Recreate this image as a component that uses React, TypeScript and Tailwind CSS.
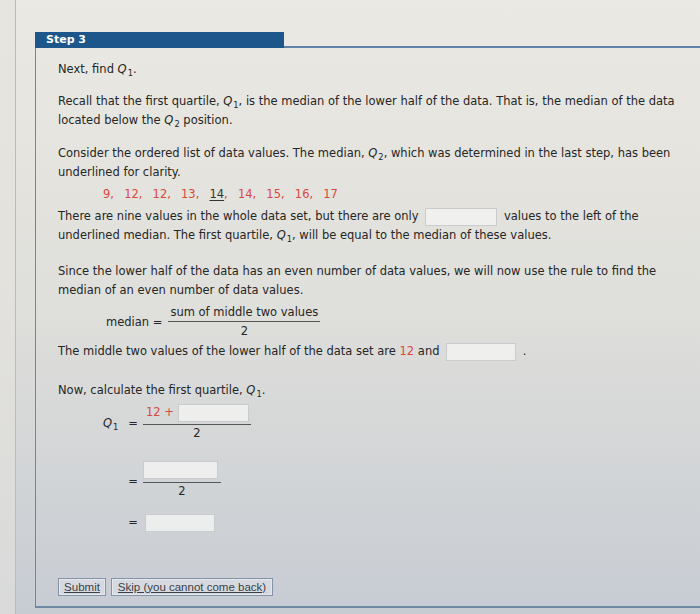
import React from "react"

const Q = ({ sub }: { sub: string }) => (
  <span className="whitespace-nowrap">
    <span className="italic pr-[1px]">Q</span>
    <span className="inline-block text-[0.72em] leading-none translate-y-[3px]">{sub}</span>
  </span>
)

const Box = ({ w = 72, className = "" }: { w?: number; className?: string }) => (
  <span
    className={`inline-block h-[18px] align-middle bg-[#f4f4f2]/80 border border-[#c9cbcc] ${className}`}
    style={{ width: w }}
  />
)

export default function App() {
  return (
    <div
      className="relative w-[700px] h-[614px] overflow-hidden flex bg-gradient-to-b from-[#ebe9e3] via-[#dfdfdb] to-[#c7ccd3] text-[#262626]"
      style={{ fontFamily: '"DejaVu Sans", Verdana, sans-serif' }}
    >
      {/* left edge strip */}
      <div className="w-[16px] h-full shrink-0 border-r border-[#b9bbbd] bg-[#e4e2dd]/60" />

      <div className="flex-1 pl-[19px] pt-[32px] flex flex-col h-[608px]">
        {/* tab row */}
        <div className="flex h-[16px] shrink-0">
          <div className="w-[249px] bg-[#1c568b] text-white font-bold text-[11px] leading-[16px] pl-[11px]">
            Step 3
          </div>
          <div className="flex-1 border-b-2 border-[#5f82a6]" />
        </div>

        {/* body */}
        <div className="flex-1 border-l border-b-2 border-[#6f87a3] pl-[22px] pr-1 text-[11.5px] leading-[19px] whitespace-nowrap">
          <p className="mt-[12px]">
            Next, find <Q sub="1" />.
          </p>

          <div className="mt-[13px]">
            <div>
              Recall that the first quartile, <Q sub="1" />, is the median of the lower half of the data. That is, the median of the data
            </div>
            <div>
              located below the <Q sub="2" /> position.
            </div>
          </div>

          <div className="mt-[14px]">
            <div>
              Consider the ordered list of data values. The median, <Q sub="2" />, which was determined in the last step, has been
            </div>
            <div>underlined for clarity.</div>
          </div>

          <p className="mt-[3px] pl-[45px] text-[#d9493d] [word-spacing:6.5px]">
            9, 12, 12, 13, <span className="underline underline-offset-2 text-[#333]">14</span>, 14, 15, 16, 17
          </p>

          <div className="mt-[3px]">
            <div>
              There are nine values in the whole data set, but there are only <Box w={72} className="mx-[3px]" /> values to the left of the
            </div>
            <div>
              underlined median. The first quartile, <Q sub="1" />, will be equal to the median of these values.
            </div>
          </div>

          <div className="mt-[17px]">
            <div>Since the lower half of the data has an even number of data values, we will now use the rule to find the</div>
            <div>median of an even number of data values.</div>
          </div>

          {/* median formula */}
          <div className="mt-[3px] flex items-center pl-[48px]">
            <span className="mr-[6px]">median =</span>
            <div className="flex flex-col items-center">
              <span className="px-[2px] leading-[18px]">sum of middle two values</span>
              <span className="w-full border-t border-[#555]" />
              <span className="leading-[19px]">2</span>
            </div>
          </div>

          <p className="mt-[1px]">
            The middle two values of the lower half of the data set are <span className="text-[#d9493d]">12</span> and{" "}
            <Box w={70} className="ml-[3px]" /> <span className="ml-[3px]">.</span>
          </p>

          <p className="mt-[20px]">
            Now, calculate the first quartile, <Q sub="1" />.
          </p>

          {/* Q1 steps */}
          <div className="mt-[3px] grid grid-cols-[85px_auto] items-center">
            <div className="flex justify-end pr-[5px] pt-[2px]">
              <Q sub="1" />
              <span className="ml-[10px]">=</span>
            </div>
            <div className="flex flex-col w-fit">
              <div className="flex items-center pl-[3px] pr-[2px] h-[19px]">
                <span className="text-[#d9493d] mr-[4px]">12 +</span>
                <Box w={71} />
              </div>
              <span className="mt-[2px] w-full border-t border-[#555]" />
              <span className="text-center leading-[17px]">2</span>
            </div>

            <div className="flex justify-end pr-[5px] mt-[18px] pt-[2px]">=</div>
            <div className="flex flex-col w-fit mt-[18px]">
              <div className="flex items-center h-[19px] pr-[3px]">
                <Box w={75} />
              </div>
              <span className="mt-[3px] w-full border-t border-[#555]" />
              <span className="text-center leading-[17px]">2</span>
            </div>

            <div className="flex justify-end pr-[5px] mt-[13px]">=</div>
            <div className="mt-[13px] pl-[2px] h-[19px] flex items-center">
              <Box w={70} />
            </div>
          </div>

          {/* buttons */}
          <div
            className="mt-[46px] flex gap-[5px] text-[11.5px] leading-[15px] text-[#3a3f47]"
            style={{ fontFamily: '"Liberation Sans", Arial, sans-serif' }}
          >
            <button className="w-[48px] h-[18px] border border-[#8393a8] bg-[#d6dae0] shadow-[inset_0_0_0_1px_#e6e9ec] underline">
              Submit
            </button>
            <button className="w-[162px] h-[18px] border border-[#8393a8] bg-[#d6dae0] shadow-[inset_0_0_0_1px_#e6e9ec] underline">
              Skip (you cannot come back)
            </button>
          </div>
        </div>
      </div>
    </div>
  )
}
